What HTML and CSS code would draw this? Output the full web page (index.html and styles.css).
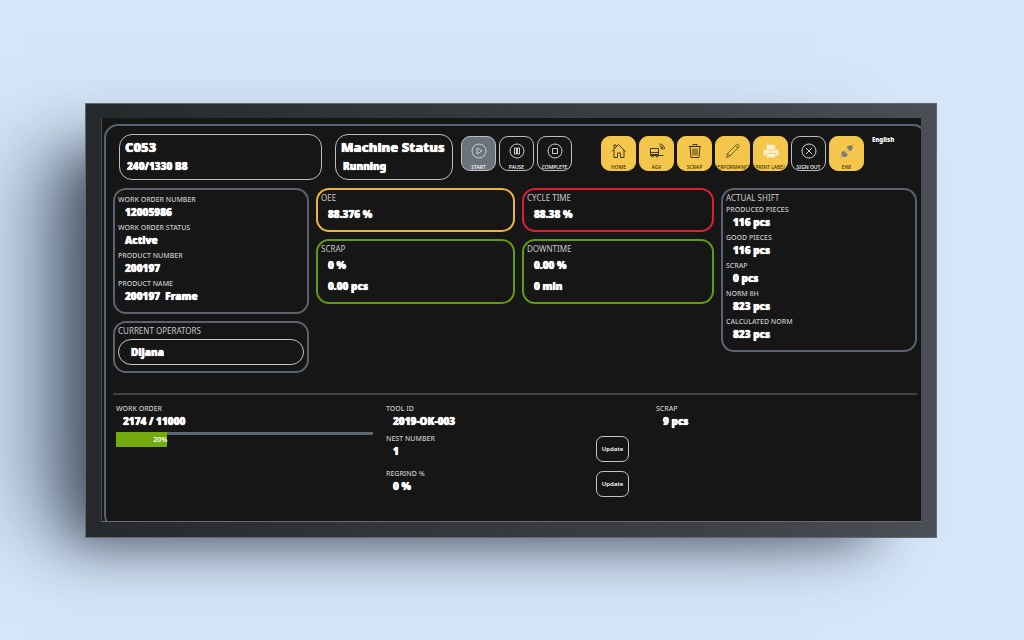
FILE: index.html
```html
<!DOCTYPE html>
<html lang="en">
<head>
	<meta charset="UTF-8">
	<title>C053 - Machine Status</title>
	<link rel="stylesheet" href="styles.css">
</head>
<body>
	<div class="monitor">
		<div class="screen">
			<div class="panel">
				<header class="top">
					<div class="info machine">
						<h1>C053</h1>
						<p>240/1330 B8</p>
					</div>
					<div class="info status">
						<h2>Machine Status</h2>
						<p>Running</p>
					</div>
					<div class="buttons">
						<button type="button" class="btn active">
							<svg viewBox="0 0 16 16"><circle cx="8" cy="8" r="7"/><path d="M6 5v6l5-3z"/></svg>
							<span>START</span>
						</button>
						<button type="button" class="btn">
							<svg viewBox="0 0 16 16"><circle cx="8" cy="8" r="7"/><path d="M5.5 5h2v6h-2zM8.5 5h2v6h-2z"/></svg>
							<span>PAUSE</span>
						</button>
						<button type="button" class="btn">
							<svg viewBox="0 0 16 16"><circle cx="8" cy="8" r="7"/><path d="M5.5 5.5h5v5h-5z"/></svg>
							<span>COMPLETE</span>
						</button>
					</div>
					<nav class="buttons tools">
						<button type="button" class="btn yellow">
							<svg viewBox="0 0 16 16"><path d="M1 8.5L7.5 1.5L14.5 8.5M3 7v7.5h3.5V10h3v4.5H13V7M3 5.5V2h2v1.5"/></svg>
							<span>HOME</span>
						</button>
						<button type="button" class="btn yellow">
							<svg viewBox="0 0 16 16"><path d="M1.5 5.5h8v6h-8zM1 12.5h13.5M1.5 9.5h8M11.5 5a1.500 1.500 0 0 1 1.500 1.500M10.500 3a3.500 3.500 0 0 1 3.500 3.500M10.500 1a5 5 0 0 1 5 5"/><circle cx="3.500" cy="13" r="1"/><circle cx="8" cy="13" r="1"/></svg>
							<span>AGV</span>
						</button>
						<button type="button" class="btn yellow">
							<svg viewBox="0 0 16 16"><path d="M2 3.5h12M6 3.5v-2h4v2M3 3.5l1 11h8l1-11M6 5.5v7M8 5.5v7M10 5.5v7"/></svg>
							<span>SCRAP</span>
						</button>
						<button type="button" class="btn yellow">
							<svg class="pencil" viewBox="0 0 16 16"><path d="M1.5 14.5l1-4L11.5 1.5q1-.6 2 .4q1 1 .4 2L5 13zM2.5 10.5L5 13M10.5 2.5L13 5"/></svg>
							<span>PERFORMANCE</span>
						</button>
						<button type="button" class="btn yellow">
							<svg class="printer" viewBox="0 0 16 16"><path d="M2 7h12q1 0 1 1v4H1V8q0-1 1-1z"/><path class="paper" d="M3.5 7V1.5h7l2 2V7zM3.5 10.5h9v4h-9z"/></svg>
							<span>PRINT LABEL</span>
						</button>
						<button type="button" class="btn">
							<svg viewBox="0 0 16 16"><circle cx="8" cy="8" r="7"/><path d="M5 5l6 6M11 5l-6 6"/></svg>
							<span>SIGN OUT</span>
						</button>
						<button type="button" class="btn yellow">
							<svg class="plug" viewBox="0 0 16 16"><path class="wire" d="M1 15l3-3M12 4l3-3M6.5 8.5L8 7M8 9.5L9.5 8"/><path d="M3 9.5l1.5-1.5 4 4L7 13.5H4L3 12zM8 4.5L10 3h3v3l-1.5 2z"/></svg>
							<span>EWI</span>
						</button>
					</nav>
					<select class="lang" aria-label="Language">
						<option>English</option>
					</select>
				</header>

				<main class="cards">
					<div class="col">
						<section class="card">
							<dl>
								<dt>WORK ORDER NUMBER</dt>
								<dd>12005986</dd>
								<dt>WORK ORDER STATUS</dt>
								<dd>Active</dd>
								<dt>PRODUCT NUMBER</dt>
								<dd>200197</dd>
								<dt>PRODUCT NAME</dt>
								<dd>200197&nbsp; Frame</dd>
							</dl>
						</section>
						<section class="card operators">
							<h3>CURRENT OPERATORS</h3>
							<div class="operator">Dijana</div>
						</section>
					</div>
					<div class="col">
						<section class="card kpi warn">
							<h3>OEE</h3>
							<p>88.376 %</p>
						</section>
						<section class="card kpi good">
							<h3>SCRAP</h3>
							<p>0 %</p>
							<p>0.00 pcs</p>
						</section>
					</div>
					<div class="col">
						<section class="card kpi bad">
							<h3>CYCLE TIME</h3>
							<p>88.38 %</p>
						</section>
						<section class="card kpi good">
							<h3>DOWNTIME</h3>
							<p>0.00 %</p>
							<p>0 min</p>
						</section>
					</div>
					<div class="col">
						<section class="card shift">
							<h3>ACTUAL SHIFT</h3>
							<dl>
								<dt>PRODUCED PIECES</dt>
								<dd>116 pcs</dd>
								<dt>GOOD PIECES</dt>
								<dd>116 pcs</dd>
								<dt>SCRAP</dt>
								<dd>0 pcs</dd>
								<dt>NORM 8H</dt>
								<dd>823 pcs</dd>
								<dt>CALCULATED NORM</dt>
								<dd>823 pcs</dd>
							</dl>
						</section>
					</div>
				</main>

				<footer class="order">
					<div>
						<dl>
							<dt>WORK ORDER</dt>
							<dd>2174 / 11000</dd>
						</dl>
						<div class="progress">
							<div class="bar" style="width: 20%">20%</div>
						</div>
					</div>
					<div>
						<dl>
							<dt>TOOL ID</dt>
							<dd>2019-OK-003</dd>
						</dl>
						<div class="line">
							<dl>
								<dt>NEST NUMBER</dt>
								<dd>1</dd>
							</dl>
							<button type="button" class="update">Update</button>
						</div>
						<div class="line">
							<dl>
								<dt>REGRIND %</dt>
								<dd>0 %</dd>
							</dl>
							<button type="button" class="update">Update</button>
						</div>
					</div>
					<div>
						<dl>
							<dt>SCRAP</dt>
							<dd>9 pcs</dd>
						</dl>
					</div>
				</footer>
			</div>
		</div>
	</div>
</body>
</html>
```
FILE: styles.css
```css
*{
	margin: 0;
	padding: 0;
	box-sizing: border-box;
}
body{
	background: #d5e6f8;
	color: #fff;
	font-family: "Noto Sans", "Open Sans", sans-serif;
	font-size: 10px;
	overflow: hidden;
}
button, select{
	font-family: inherit;
	color: inherit;
	background: none;
}

/* monitor frame */
.monitor{
	margin: 103px 87px 103px 85px;
	padding: 14px 15px 15px;
	border: 1px solid #62666d;
	background: linear-gradient(to right, #26292c, #303437 30%, #3c4045 70%, #4b4e55);
	box-shadow: -40px 28px 50px -24px rgba(40,50,62,.7), -90px 20px 80px -30px rgba(60,75,100,.5);
}
.screen{
	padding: 6px 0 0 2px;
	border-left: 1px solid #45484c;
	border-bottom: 1px solid #6b6b6b;
	background: #161616;
	overflow: hidden;
}
.panel{
	margin: 0 -6px -8px 0;
	padding: 8px 8px 25px 7px;
	border: 2px solid #5a636d;
	border-radius: 14px;
}

/* header */
.top{
	display: flex;
	align-items: flex-start;
	margin-bottom: 8px;
	padding-left: 6px;
}
.info{
	height: 46px;
	padding: 3px 5px;
	border: 1px solid #bdbdbd;
	border-radius: 13px;
	white-space: nowrap;
}
.info h1, .info h2{
	font-size: 13px;
	line-height: 18px;
	font-weight: 900;
}
.info p{
	padding-left: 2px;
	font-size: 10px;
	line-height: 20px;
	font-weight: 900;
}
/* a second pass of the glyphs, for heavier values */
.info, .kpi p, .operator, dd{
	text-shadow: 0 0 0 #fff, 0 0 1px #fff;
}
.machine{
	width: 203px;
	margin-right: 13px;
}
.status{
	width: 118px;
	margin-right: 8px;
}
.buttons{
	display: flex;
	gap: 3px;
	padding-top: 2px;
}
.tools{
	margin-left: auto;
}
.btn{
	display: flex;
	flex-direction: column;
	align-items: center;
	justify-content: space-between;
	width: 35px;
	height: 35px;
	padding-top: 6px;
	border: 1px solid #bdbdbd;
	border-radius: 9px;
	overflow: hidden;
}
.btn span{
	font-size: 5px;
	line-height: 6px;
	font-weight: 500;
	white-space: nowrap;
}
.btn svg{
	width: 16px;
	height: 16px;
	fill: none;
	stroke: #d0d0d0;
	stroke-width: 1;
}
.active{
	background: #6a727c;
}
.yellow{
	background: #f4c64b;
	border-color: #f4c64b;
	color: #3d3211;
}
.yellow svg{
	stroke: #44370f;
}
.yellow .pencil{
	stroke: #6b5a24;
}
.yellow .printer{
	fill: #fdf1cd;
	stroke: #fdf1cd;
}
.printer .paper{
	stroke: #f4d27a;
}
.yellow .plug{
	fill: #7d7b78;
	stroke: #7d7b78;
}
.plug .wire{
	stroke: #a89b78;
}
.lang{
	width: 45px;
	margin-left: 8px;
	border: 0;
	appearance: none;
	font-size: 6px;
	line-height: 12px;
	font-weight: 900;
}

/* cards */
.cards{
	display: grid;
	grid-template-columns: 196fr 199fr 192fr 196fr;
	gap: 7px;
	align-items: start;
}
.col{
	display: grid;
	gap: 7px;
}
.card{
	padding: 5px 3px;
	border: 2px solid #5a636d;
	border-radius: 13px;
}
h3{
	font-size: 8px;
	line-height: 12px;
	font-weight: 400;
	color: #c8c8c8;
}
dt{
	font-size: 7px;
	line-height: 10px;
	font-weight: 500;
	color: #c8c8c8;
}
dd{
	margin-bottom: 4px;
	padding-left: 7px;
	line-height: 14px;
	font-weight: 900;
}
.kpi{
	padding: 2px 3px 5px;
}
.kpi p{
	padding-left: 7px;
	line-height: 21px;
	font-weight: 900;
}
.warn{
	border-color: #eab53a;
}
.bad{
	border-color: #dc1f35;
}
.good{
	border-color: #629b0f;
}
.operators{
	padding: 2px 3px 6px;
}
.operators h3{
	margin-bottom: 2px;
}
.operator{
	padding-left: 12px;
	border: 1px solid #c4c4c4;
	border-radius: 13px;
	line-height: 24px;
	font-weight: 900;
}
.shift{
	padding: 2px 3px 5px;
}
.shift h3{
	margin-bottom: 1px;
}

/* work order */
.order{
	display: grid;
	grid-template-columns: repeat(3, 1fr);
	gap: 13px;
	margin-top: 20px;
	padding: 9px 4px 0 3px;
	border-top: 2px solid #3f4347;
}
.progress{
	height: 3px;
	margin-top: 1px;
	background: #5e6771;
}
.bar{
	height: 15px;
	background: #73ab0e;
	font-size: 7px;
	line-height: 15px;
	font-weight: 600;
	text-align: right;
}
.line{
	display: flex;
	justify-content: space-between;
	align-items: flex-end;
	padding: 2px 14px 5px 0;
}
.update{
	width: 33px;
	height: 26px;
	border: 1px solid #c4c4c4;
	border-radius: 7px;
	font-size: 6px;
	font-weight: 600;
}
```
